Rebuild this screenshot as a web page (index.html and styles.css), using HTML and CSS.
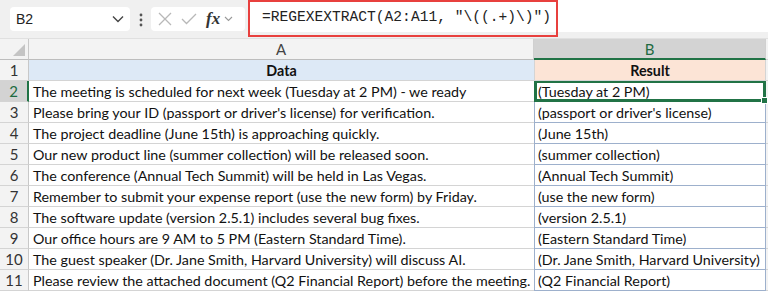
FILE: index.html
```html
<!DOCTYPE html>
<html lang="en">
<head>
  <meta charset="UTF-8">
  <title>REGEXEXTRACT</title>
  <link rel="stylesheet" href="styles.css">
</head>
<body>

  <!-- Barre de formule -->
  <div class="toolbar">
    <div class="name-box">
      <span>B2</span>
      <svg class="chev" width="12" height="8" viewBox="0 0 12 8"><path d="M1 1.5 L6 6.5 L11 1.5" fill="none" stroke="#444" stroke-width="1.4"/></svg>
    </div>
    <svg class="dots" width="4" height="14" viewBox="0 0 4 14"><circle cx="2" cy="2" r="1.4" fill="#555"/><circle cx="2" cy="7" r="1.4" fill="#555"/><circle cx="2" cy="12" r="1.4" fill="#555"/></svg>
    <div class="fx-box">
      <svg width="14" height="14" viewBox="0 0 14 14"><path d="M1 1 L13 13 M13 1 L1 13" stroke="#b8b8b8" stroke-width="1.3"/></svg>
      <svg width="16" height="12" viewBox="0 0 16 12"><path d="M1 6 L5.5 10.5 L15 1" fill="none" stroke="#b8b8b8" stroke-width="1.3"/></svg>
      <span class="fx">fx</span>
      <svg width="9" height="6" viewBox="0 0 9 6"><path d="M1 1 L4.5 4.5 L8 1" fill="none" stroke="#999" stroke-width="1.1"/></svg>
    </div>
    <div class="formula">=REGEXEXTRACT(A2:A11, "\((.+)\)")</div>
    <div class="callout"></div>
  </div>

  <!-- Feuille -->
  <div class="sheet">
    <div class="corner"></div>
    <div class="col-head">A</div>
    <div class="col-head active">B</div>
    <div class="stub"></div>

    <div class="rn">1</div>
    <div class="cell title-a">Data</div>
    <div class="cell title-b">Result</div>
    <div class="stub"></div>

    <div class="rn active">2</div>
    <div class="cell">The meeting is scheduled for next week (Tuesday at 2 PM) - we ready</div>
    <div class="cell res selected">(Tuesday at 2 PM)</div>
    <div class="stub"></div>

    <div class="rn">3</div>
    <div class="cell">Please bring your ID (passport or driver's license) for verification.</div>
    <div class="cell res">(passport or driver's license)</div>
    <div class="stub"></div>

    <div class="rn">4</div>
    <div class="cell">The project deadline (June 15th) is approaching quickly.</div>
    <div class="cell res">(June 15th)</div>
    <div class="stub"></div>

    <div class="rn">5</div>
    <div class="cell">Our new product line (summer collection) will be released soon.</div>
    <div class="cell res">(summer collection)</div>
    <div class="stub"></div>

    <div class="rn">6</div>
    <div class="cell">The conference (Annual Tech Summit) will be held in Las Vegas.</div>
    <div class="cell res">(Annual Tech Summit)</div>
    <div class="stub"></div>

    <div class="rn">7</div>
    <div class="cell">Remember to submit your expense report (use the new form) by Friday.</div>
    <div class="cell res">(use the new form)</div>
    <div class="stub"></div>

    <div class="rn">8</div>
    <div class="cell">The software update (version 2.5.1) includes several bug fixes.</div>
    <div class="cell res">(version 2.5.1)</div>
    <div class="stub"></div>

    <div class="rn">9</div>
    <div class="cell">Our office hours are 9 AM to 5 PM (Eastern Standard Time).</div>
    <div class="cell res">(Eastern Standard Time)</div>
    <div class="stub"></div>

    <div class="rn">10</div>
    <div class="cell">The guest speaker (Dr. Jane Smith, Harvard University) will discuss AI.</div>
    <div class="cell res">(Dr. Jane Smith, Harvard University)</div>
    <div class="stub"></div>

    <div class="rn">11</div>
    <div class="cell">Please review the attached document (Q2 Financial Report) before the meeting.</div>
    <div class="cell res">(Q2 Financial Report)</div>
    <div class="stub"></div>
  </div>

</body>
</html>
```

FILE: styles.css
```css
body {
  margin: 0;
  padding: 0;
  width: 768px;
  height: 291px;
  overflow: hidden;
  background: #ffffff;
  font-family: "Lato", "Open Sans", sans-serif;
}

.toolbar {
  position: relative;
  height: 39px;
  background: #f0f0f0;
  display: flex;
  align-items: flex-start;
  box-sizing: border-box;
  border-bottom: 1px solid #e0e0e0;
}

.name-box {
  margin: 7px 0 0 10px;
  width: 120px;
  height: 24px;
  background: white;
  border-radius: 4px;
  display: flex;
  align-items: center;
  justify-content: space-between;
  padding: 0 6px 0 6px;
  box-sizing: border-box;
  font-family: "Liberation Sans", sans-serif;
  font-size: 14px;
  color: #222;
}

.dots {
  margin: 13px 8px 0 9px;
}

.fx-box {
  margin-top: 7px;
  width: 94px;
  height: 24px;
  background: white;
  border-radius: 4px;
  display: flex;
  align-items: center;
  gap: 9px;
  padding-left: 7px;
  box-sizing: border-box;
}

.fx {
  font-family: "Liberation Serif", serif;
  font-style: italic;
  font-weight: bold;
  font-size: 17px;
  color: #333;
  margin-right: -5px;
}

.formula {
  flex-grow: 1;
  margin-left: 3px;
  height: 32px;
  background: white;
  border-radius: 0 0 0 4px;
  padding-left: 14px;
  box-sizing: border-box;
  line-height: 34px;
  font-family: "Liberation Mono", monospace;
  font-size: 14.6px;
  color: #222;
  white-space: pre;
}

.callout {
  position: absolute;
  left: 248px;
  top: 0;
  width: 310px;
  height: 37px;
  border: 2px solid #e8403e;
  box-sizing: border-box;
}

.sheet {
  display: grid;
  grid-template-columns: 29px 505px 232px 2px;
  grid-auto-rows: 21px;
  font-size: 14.3px;
  color: #111;
}

.sheet > div {
  box-sizing: border-box;
  white-space: nowrap;
  overflow: hidden;
}

.corner {
  background: #f3f3f3;
  border-right: 1px solid #c8c8c8;
  border-bottom: 1px solid #bdbdbd;
  position: relative;
}

.corner::after {
  content: "";
  position: absolute;
  right: 3px;
  bottom: 3px;
  border-left: 12px solid transparent;
  border-bottom: 12px solid #c4c4c4;
}

.col-head {
  background: #f3f3f3;
  border-right: 1px solid #d0d0d0;
  border-bottom: 1px solid #bdbdbd;
  text-align: center;
  line-height: 21px;
  font-size: 15px;
  color: #444;
}

.col-head.active {
  background: #d3d3d3;
  border-bottom: 2px solid #217346;
  color: #1e6b41;
}

.stub {
  background: #f3f3f3;
  border-bottom: 1px solid #d4d4d4;
}

.rn {
  background: #f3f3f3;
  border-right: 1px solid #c8c8c8;
  border-bottom: 1px solid #d4d4d4;
  text-align: center;
  line-height: 21px;
  font-size: 15px;
  color: #333;
}

.rn.active {
  background: #d3d3d3;
  border-right: 2px solid #217346;
  color: #1e6b41;
}

.cell {
  border-bottom: 1px solid #d4d4d4;
  padding-left: 4px;
  line-height: 21px;
}

.title-a {
  background: #dde9f6;
  font-weight: bold;
  text-align: center;
  padding-left: 0;
}

.title-b {
  background: #fce4d6;
  font-weight: bold;
  text-align: center;
  border-left: 1px solid #d4d4d4;
  border-right: 1px solid #d4d4d4;
  padding-left: 0;
}

.res {
  border-left: 1px solid #9db0cc;
  border-right: 1px solid #9db0cc;
  border-bottom-color: #9db0cc;
  padding-left: 3px;
}

.selected {
  position: relative;
  overflow: visible !important;
  box-shadow: inset 0 0 0 2px #217346;
  border-color: #217346;
}

.selected::after {
  content: "";
  position: absolute;
  right: -3px;
  bottom: -3px;
  width: 5px;
  height: 5px;
  background: #217346;
  border: 1px solid white;
}
```
